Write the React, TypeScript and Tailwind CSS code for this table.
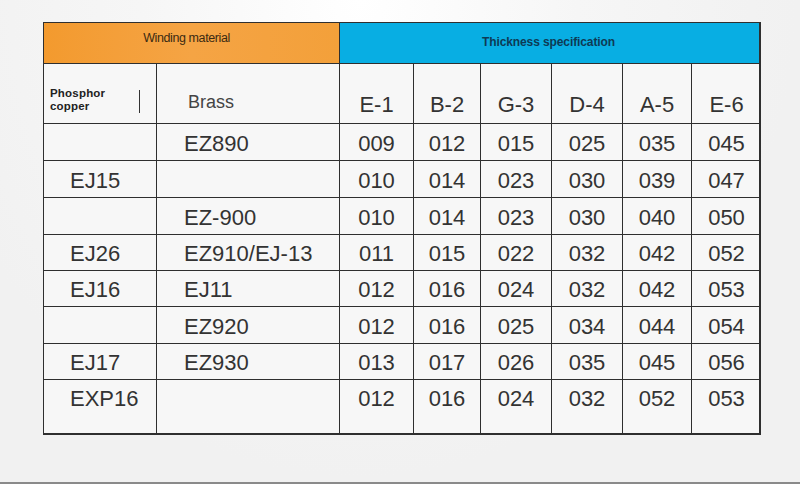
import React from "react";

const cols = "grid grid-cols-[113px_183px_74px_67px_71px_71px_69px_69px]";

const rows: [string, string, string[]][] = [
  ["", "EZ890", ["009", "012", "015", "025", "035", "045"]],
  ["EJ15", "", ["010", "014", "023", "030", "039", "047"]],
  ["", "EZ-900", ["010", "014", "023", "030", "040", "050"]],
  ["EJ26", "EZ910/EJ-13", ["011", "015", "022", "032", "042", "052"]],
  ["EJ16", "EJ11", ["012", "016", "024", "032", "042", "053"]],
  ["", "EZ920", ["012", "016", "025", "034", "044", "054"]],
  ["EJ17", "EZ930", ["013", "017", "026", "035", "045", "056"]],
  ["EXP16", "", ["012", "016", "024", "032", "052", "053"]],
];

const heights = ["h-[37px]", "h-[37px]", "h-[36px]", "h-[36px]", "h-[37px]", "h-[36px]", "h-[36px]", "h-[54px]"];

export default function App() {
  return (
    <div className="w-[800px] h-[484px] bg-[#f3f3f3] bg-[radial-gradient(ellipse_at_45%_0%,#ffffff_0%,#f6f6f6_35%,#f1f1f1_70%)] border-b-2 border-[#8a8a8a] pt-[22px] pl-[43px] font-['Liberation_Sans',Arial,sans-serif] text-[#333]">
      <div className="w-[718px] border-l border-t border-r-2 border-b-2 border-[#2f2f2f] bg-[#f7f7f7]">
        {/* colored header */}
        <div className="flex h-[41px] border-b border-[#2f2f2f]">
          <div className="w-[296px] bg-gradient-to-r from-[#f39a2e] via-[#f5a444] to-[#f3a03a] border-r border-[#2f2f2f] flex justify-center pt-[6px] pr-[10px] text-[12.5px] text-[#3b2a12] tracking-[-0.4px]">
            Winding material
          </div>
          <div className="flex-1 bg-[#08aee3] flex justify-center pt-[10px] pr-[2px] text-[12px] font-bold text-[#0e3a55] tracking-[-0.1px]">
            Thickness specification
          </div>
        </div>
        {/* column header row */}
        <div className={`${cols} h-[60px]`}>
          <div className="border-r border-b border-[#2f2f2f] flex items-end pb-[10px] pl-[6px] pr-[16px] justify-between">
            <div className="text-[11.5px] font-bold leading-[13px] text-[#222] tracking-[0.2px]">
              <div>Phosphor</div>
              <div>copper</div>
            </div>
            <div className="w-px h-[23px] bg-[#333]"></div>
          </div>
          <div className="border-r border-b border-[#2f2f2f] flex items-end pb-[7px] pl-[31px] text-[18px] text-[#444]">
            Brass
          </div>
          {["E-1", "B-2", "G-3", "D-4", "A-5", "E-6"].map((h, i) => (
            <div
              key={h}
              className={`border-b border-[#2f2f2f] flex items-end justify-center pb-[2px] text-[22px] ${i < 5 ? "border-r" : ""}`}
            >
              {h}
            </div>
          ))}
        </div>
        {rows.map(([a, b, nums], r) => (
          <div key={r} className={`${cols} ${heights[r]}`}>
            <div className={`border-r border-[#2f2f2f] ${r < 7 ? "border-b" : ""} pl-[26px] pt-[3px] text-[22px]`}>{a}</div>
            <div className={`border-r border-[#2f2f2f] ${r < 7 ? "border-b" : ""} pl-[27px] pt-[3px] text-[22px]`}>{b}</div>
            {nums.map((n, i) => (
              <div
                key={i}
                className={`border-[#2f2f2f] ${r < 7 ? "border-b" : ""} ${i < 5 ? "border-r" : ""} flex justify-center pt-[3px] text-[22px]`}
              >
                {n}
              </div>
            ))}
          </div>
        ))}
      </div>
    </div>
  );
}
